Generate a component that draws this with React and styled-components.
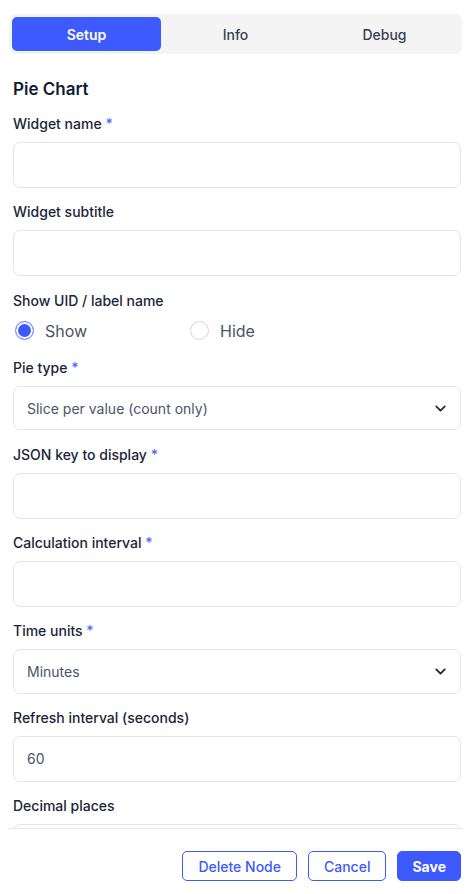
import React from "react";
import styled, { createGlobalStyle } from "styled-components";
import { ChevronDown } from "lucide-react";

const GlobalStyle = createGlobalStyle`
  html, body {
    margin: 0;
    padding: 0;
    background: #ffffff;
    font-family: Inter, "Noto Sans", sans-serif;
  }
  * {
    box-sizing: border-box;
  }
`;

const fields = [
  { type: "input", label: "Widget name", required: true },
  { type: "input", label: "Widget subtitle" },
  { type: "radio", label: "Show UID / label name" },
  { type: "select", label: "Pie type", required: true, value: "Slice per value (count only)" },
  { type: "input", label: "JSON key to display", required: true },
  { type: "input", label: "Calculation interval", required: true },
  { type: "select", label: "Time units", required: true, value: "Minutes" },
  { type: "input", label: "Refresh interval (seconds)", value: "60" },
  { type: "input", label: "Decimal places" },
];

export default function App() {
  return (
    <>
      <GlobalStyle />
      <Panel>
        <Tabs>
          <Tab $active>Setup</Tab>
          <Tab>Info</Tab>
          <Tab>Debug</Tab>
        </Tabs>
        <ScrollArea>
          <Heading>Pie Chart</Heading>
          {fields.map((f) => (
            <Field key={f.label}>
              <Label>
                {f.label}
                {f.required && <Required> *</Required>}
              </Label>
              {f.type === "input" && <TextInput defaultValue={f.value || ""} />}
              {f.type === "select" && (
                <SelectBox>
                  <span>{f.value}</span>
                  <ChevronDown size={17} strokeWidth={2.6} color="#1f2937" />
                </SelectBox>
              )}
              {f.type === "radio" && (
                <RadioRow>
                  <RadioOption>
                    <RadioDot $checked />
                    Show
                  </RadioOption>
                  <RadioOption>
                    <RadioDot />
                    Hide
                  </RadioOption>
                </RadioRow>
              )}
            </Field>
          ))}
        </ScrollArea>
        <Footer>
          <OutlineButton>Delete Node</OutlineButton>
          <OutlineButton>Cancel</OutlineButton>
          <PrimaryButton>Save</PrimaryButton>
        </Footer>
      </Panel>
    </>
  );
}

const Panel = styled.div`
  height: 894px;
  display: flex;
  flex-direction: column;
  padding: 14px 12px 0 9px;
`;

const Tabs = styled.div`
  display: grid;
  grid-template-columns: repeat(3, 1fr);
  height: 40px;
  padding: 3px;
  background: #f4f4f5;
  border-radius: 7px;
  flex-shrink: 0;
`;

const Tab = styled.div`
  display: flex;
  align-items: center;
  justify-content: center;
  border-radius: 5px;
  font-size: 14px;
  font-weight: ${(p) => (p.$active ? 600 : 500)};
  color: ${(p) => (p.$active ? "#ffffff" : "#374151")};
  background: ${(p) => (p.$active ? "#3d5afe" : "transparent")};
`;

const ScrollArea = styled.div`
  flex: 1;
  overflow: hidden;
  padding: 0 1px 0 4px;
`;

const Heading = styled.h2`
  margin: 23px 0 13px;
  font-size: 17px;
  line-height: 24px;
  font-weight: 600;
  color: #0f1d33;
`;

const Field = styled.div`
  display: flex;
  flex-direction: column;
  margin-bottom: 14.25px;
`;

const Label = styled.div`
  font-size: 14px;
  line-height: 20px;
  font-weight: 500;
  color: #1b2537;
  margin-bottom: 8px;
`;

const Required = styled.span`
  color: #4f6bff;
`;

const TextInput = styled.input`
  height: 46px;
  width: 100%;
  border: 1px solid #e4e5e8;
  border-radius: 7px;
  padding: 0 13px;
  font-family: inherit;
  font-size: 14px;
  color: #475569;
  outline: none;
  background: #fff;
`;

const SelectBox = styled.div`
  height: 44.5px;
  display: flex;
  align-items: center;
  justify-content: space-between;
  border: 1px solid #e4e5e8;
  border-radius: 7px;
  padding: 0 11px 0 13px;
  font-size: 14px;
  color: #475569;
`;

const RadioRow = styled.div`
  display: grid;
  grid-template-columns: 175px auto;
  height: 24px;
  align-items: center;
  padding-left: 2px;
  margin-bottom: 1px;
`;

const RadioOption = styled.label`
  display: flex;
  align-items: center;
  gap: 11px;
  font-size: 16px;
  color: #4b5563;
`;

const RadioDot = styled.span`
  width: 19px;
  height: 19px;
  border-radius: 50%;
  border: 1.5px solid ${(p) => (p.$checked ? "#7d8fff" : "#d4d6db")};
  background: ${(p) => (p.$checked ? "#3d5afe" : "#fff")};
  box-shadow: ${(p) => (p.$checked ? "inset 0 0 0 2px #fff" : "none")};
  flex-shrink: 0;
`;

const Footer = styled.div`
  display: flex;
  justify-content: flex-end;
  gap: 11px;
  border-top: 1px solid #e5e7eb;
  padding: 22px 1px 13px 0;
  flex-shrink: 0;
`;

const OutlineButton = styled.button`
  height: 30px;
  padding: 0 15px;
  border: 1px solid #3d5afe;
  border-radius: 5px;
  background: #fff;
  color: #3d5afe;
  font-family: inherit;
  font-size: 14px;
  font-weight: 500;
`;

const PrimaryButton = styled(OutlineButton)`
  padding: 0 14px;
  background: #3d5afe;
  color: #fff;
  font-weight: 700;
`;
